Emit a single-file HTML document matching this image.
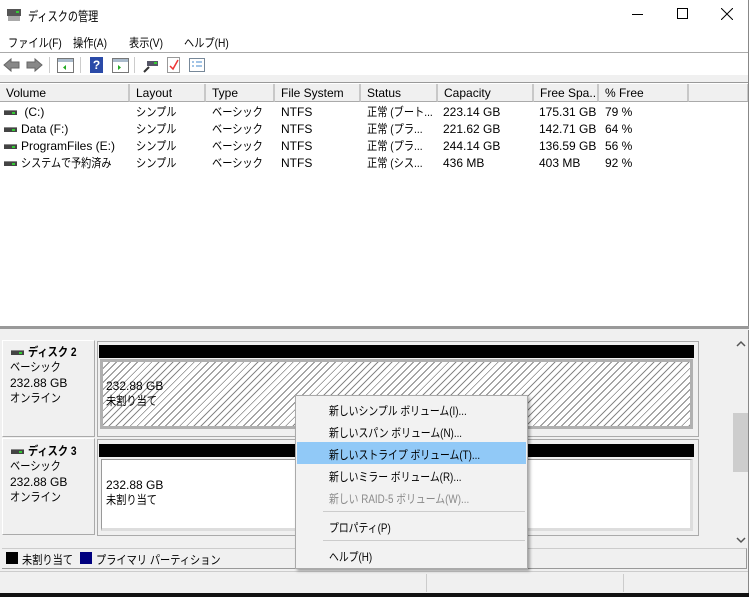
<!DOCTYPE html><html><head><meta charset="utf-8"><style>
*{margin:0;padding:0;box-sizing:border-box}
body{width:753px;height:597px;position:relative;overflow:hidden;background:#fff;font-family:"Liberation Sans","Noto Sans CJK JP",sans-serif;font-size:12px;color:#000}
.a{position:absolute;white-space:nowrap}
.s{transform:scaleX(.85);transform-origin:0 0}
.hd{position:absolute;top:84px;height:18px;background:#f0f0f0;border-right:2px solid #c8c8c8;border-bottom:1px solid #aaa;padding:2px 0 0 6px;font-size:12px;line-height:14px;overflow:hidden;white-space:nowrap}
.r{position:absolute;font-size:12px;line-height:17px;white-space:nowrap}
.drv{display:inline-block;width:13px;height:5px;background:#444;border-top:1px solid #888;position:relative;vertical-align:middle;margin-right:4px}
.drv:after{content:"";position:absolute;right:2px;top:1px;width:3px;height:2px;background:#3c3}
.hatch{background:repeating-linear-gradient(135deg,#fff 0 4px,#888 4px 5px)}
.mi{position:absolute;left:33px;font-size:12px;transform:scaleX(.82);transform-origin:0 0;white-space:nowrap}
</style></head><body>
<svg class="a" style="left:6px;top:7px" width="16" height="16"><rect x="1" y="2" width="14" height="7" fill="#555"/><rect x="2" y="9" width="12" height="5" fill="#aaa"/><rect x="10" y="4" width="3" height="2" fill="#3c3"/></svg>
<div class="a" style="left:28px;top:6px;font-size:13px;transform:scaleX(.78);transform-origin:0 0">ディスクの管理</div>
<div class="a" style="left:632px;top:14px;width:11px;height:1px;background:#000"></div>
<div class="a" style="left:677px;top:8px;width:11px;height:11px;border:1px solid #000"></div>
<svg class="a" style="left:721px;top:8px" width="12" height="12"><path d="M0 0L12 12M12 0L0 12" stroke="#000" stroke-width="1"/></svg>
<div class="a s" style="left:8px;top:34px">ファイル(F)</div>
<div class="a s" style="left:73px;top:34px">操作(A)</div>
<div class="a s" style="left:129px;top:34px">表示(V)</div>
<div class="a s" style="left:184px;top:34px">ヘルプ(H)</div>
<div class="a" style="left:0;top:52px;width:753px;height:1px;background:#aaa"></div>
<svg class="a" style="left:3px;top:57px" width="40" height="16"><path d="M1 8L8 2V5H16V11H8V14Z" fill="#888" stroke="#666"/><path d="M39 8L32 2V5H24V11H32V14Z" fill="#888" stroke="#666"/></svg>
<div class="a" style="left:49px;top:57px;width:1px;height:16px;background:#ccc"></div>
<svg class="a" style="left:57px;top:58px" width="17" height="15"><rect x="0.5" y="0.5" width="16" height="14" fill="#fff" stroke="#777"/><rect x="1" y="1" width="15" height="3" fill="#abc"/><path d="M9 7L6 9.5L9 12Z" fill="#2a2"/></svg>
<div class="a" style="left:80px;top:57px;width:1px;height:16px;background:#ccc"></div>
<div class="a" style="left:90px;top:57px;width:13px;height:16px;background:#2a4aa8;color:#fff;font-weight:bold;font-size:12px;text-align:center;line-height:16px">?</div>
<svg class="a" style="left:112px;top:58px" width="17" height="15"><rect x="0.5" y="0.5" width="16" height="14" fill="#fff" stroke="#777"/><rect x="1" y="1" width="15" height="3" fill="#abc"/><path d="M6 7L9 9.5L6 12Z" fill="#2a2"/></svg>
<div class="a" style="left:134px;top:57px;width:1px;height:16px;background:#ccc"></div>
<svg class="a" style="left:143px;top:58px" width="16" height="15"><rect x="4" y="3" width="11" height="5" fill="#556"/><rect x="11" y="4" width="3" height="2" fill="#3c3"/><path d="M6 9L1 14" stroke="#333" stroke-width="2"/></svg>
<svg class="a" style="left:167px;top:57px" width="13" height="16"><rect x="0.5" y="0.5" width="12" height="15" fill="#fff" stroke="#999"/><path d="M3 9L6 12L11 3" stroke="#e33" stroke-width="1.5" fill="none"/></svg>
<svg class="a" style="left:189px;top:58px" width="16" height="14"><rect x="0.5" y="0.5" width="15" height="13" fill="#fff" stroke="#789"/><path d="M3 4h2M3 8h2M7 4h6M7 8h6" stroke="#48c"/></svg>
<div class="a" style="left:0;top:75px;width:753px;height:8px;background:#f0f0f0;border-bottom:1px solid #999"></div>
<div class="hd" style="left:0;width:130px">Volume</div>
<div class="hd" style="left:130px;width:76px">Layout</div>
<div class="hd" style="left:206px;width:69px">Type</div>
<div class="hd" style="left:275px;width:86px">File System</div>
<div class="hd" style="left:361px;width:77px">Status</div>
<div class="hd" style="left:438px;width:96px">Capacity</div>
<div class="hd" style="left:534px;width:65px">Free Spa...</div>
<div class="hd" style="left:599px;width:90px">% Free</div>
<div class="hd" style="left:689px;width:60px"></div>
<div class="a" style="left:748px;top:0;width:1px;height:330px;background:#888"></div>
<div class="r" style="left:4px;top:104px"><span class="drv"></span> (C:)</div>
<div class="r" style="left:4px;top:121px"><span class="drv"></span>Data (F:)</div>
<div class="r" style="left:4px;top:138px"><span class="drv"></span>ProgramFiles (E:)</div>
<div class="r" style="left:4px;top:155px"><span class="drv"></span><span style="display:inline-block;transform:scaleX(.84);transform-origin:0 0">システムで予約済み</span></div>
<div class="r s" style="left:136px;top:104px">シンプル<br>シンプル<br>シンプル<br>シンプル</div>
<div class="r s" style="left:212px;top:104px">ベーシック<br>ベーシック<br>ベーシック<br>ベーシック</div>
<div class="r" style="left:281px;top:104px">NTFS<br>NTFS<br>NTFS<br>NTFS</div>
<div class="r s" style="left:367px;top:104px">正常 (ブート...<br>正常 (プラ...<br>正常 (プラ...<br>正常 (シス...</div>
<div class="r" style="left:443px;top:104px">223.14 GB<br>221.62 GB<br>244.14 GB<br>436 MB</div>
<div class="r" style="left:539px;top:104px">175.31 GB<br>142.71 GB<br>136.59 GB<br>403 MB</div>
<div class="r" style="left:605px;top:104px">79 %<br>64 %<br>56 %<br>92 %</div>
<div class="a" style="left:0;top:326px;width:753px;height:245px;background:#f0f0f0;border-top:3px solid #999"></div>
<div class="a" style="left:2px;top:340px;width:93px;height:97px;background:#f0f0f0;border:1px solid #fff;border-right-color:#aaa;border-bottom-color:#aaa"></div>
<div class="r" style="left:11px;top:344px;font-weight:bold"><span class="drv"></span><span style="display:inline-block;transform:scaleX(.85);transform-origin:0 0">ディスク 2</span></div>
<div class="r" style="left:10px;top:360px;line-height:15.5px"><span class="s" style="display:inline-block">ベーシック</span><br>232.88 GB<br><span class="s" style="display:inline-block">オンライン</span></div>
<div class="a" style="left:97px;top:341px;width:602px;height:96px;border:1px solid #aaa;background:#f0f0f0"></div>
<div class="a" style="left:99px;top:345px;width:595px;height:13px;background:#000"></div>
<div class="a hatch" style="left:100px;top:359px;width:593px;height:70px;border:3px solid #b0b0b0"></div>
<div class="r" style="left:106px;top:379px;line-height:15px">232.88 GB<br><span class="s" style="display:inline-block">未割り当て</span></div>
<div class="a" style="left:2px;top:438px;width:93px;height:97px;background:#f0f0f0;border:1px solid #fff;border-right-color:#aaa;border-bottom-color:#aaa"></div>
<div class="r" style="left:11px;top:443px;font-weight:bold"><span class="drv"></span><span style="display:inline-block;transform:scaleX(.85);transform-origin:0 0">ディスク 3</span></div>
<div class="r" style="left:10px;top:459px;line-height:15.5px"><span class="s" style="display:inline-block">ベーシック</span><br>232.88 GB<br><span class="s" style="display:inline-block">オンライン</span></div>
<div class="a" style="left:97px;top:439px;width:602px;height:97px;border:1px solid #aaa;background:#f0f0f0"></div>
<div class="a" style="left:99px;top:444px;width:595px;height:13px;background:#000"></div>
<div class="a" style="left:101px;top:459px;width:592px;height:72px;background:#fff;border:1px solid #999;border-right:3px solid #ddd;border-bottom:3px solid #ddd"></div>
<div class="r" style="left:106px;top:478px;line-height:15px">232.88 GB<br><span class="s" style="display:inline-block">未割り当て</span></div>
<div class="a" style="left:732px;top:333px;width:17px;height:216px;background:#f0f0f0"></div>
<svg class="a" style="left:736px;top:340px" width="10" height="8"><path d="M1 6L5 2L9 6" stroke="#555" stroke-width="1.5" fill="none"/></svg>
<div class="a" style="left:733px;top:413px;width:16px;height:59px;background:#cdcdcd"></div>
<svg class="a" style="left:736px;top:536px" width="10" height="8"><path d="M1 2L5 6L9 2" stroke="#555" stroke-width="1.5" fill="none"/></svg>
<div class="a" style="left:2px;top:548px;width:745px;height:21px;background:#f0f0f0;border-top:1px solid #ccc;border-bottom:1px solid #999;border-right:1px solid #999"></div>
<div class="a" style="left:6px;top:552px;width:12px;height:12px;background:#000"></div>
<div class="a s" style="left:22px;top:551px">未割り当て</div>
<div class="a" style="left:80px;top:552px;width:12px;height:12px;background:#00007f"></div>
<div class="a s" style="left:96px;top:551px">プライマリ パーティション</div>
<div class="a" style="left:0;top:571px;width:753px;height:22px;background:#f0f0f0;border-top:1px solid #ccc"></div>
<div class="a" style="left:426px;top:574px;width:1px;height:18px;background:#ccc"></div>
<div class="a" style="left:623px;top:574px;width:1px;height:18px;background:#ccc"></div>
<div class="a" style="left:0;top:593px;width:753px;height:4px;background:#111"></div>
<div class="a" style="left:749px;top:0;width:4px;height:597px;background:#fff"></div>
<div class="a" style="left:748px;top:330px;width:1px;height:263px;background:#888"></div>
<div class="a" style="left:295px;top:395px;width:233px;height:174px;background:#f2f2f2;border:1px solid #aaa;box-shadow:2px 2px 3px rgba(0,0,0,.35)">
<div class="mi" style="top:6px">新しいシンプル ボリューム(I)...</div>
<div class="mi" style="top:28px">新しいスパン ボリューム(N)...</div>
<div class="a" style="left:1px;top:46px;width:229px;height:22px;background:#91c9f7"></div>
<div class="mi" style="top:50px">新しいストライプ ボリューム(T)...</div>
<div class="mi" style="top:72px">新しいミラー ボリューム(R)...</div>
<div class="mi" style="top:94px;color:#8a8a8a">新しい RAID-5 ボリューム(W)...</div>
<div class="a" style="left:27px;top:115px;width:202px;height:1px;background:#ccc"></div>
<div class="mi" style="top:123px">プロパティ(P)</div>
<div class="a" style="left:27px;top:144px;width:202px;height:1px;background:#ccc"></div>
<div class="mi" style="top:152px">ヘルプ(H)</div>
</div>
</body></html>
